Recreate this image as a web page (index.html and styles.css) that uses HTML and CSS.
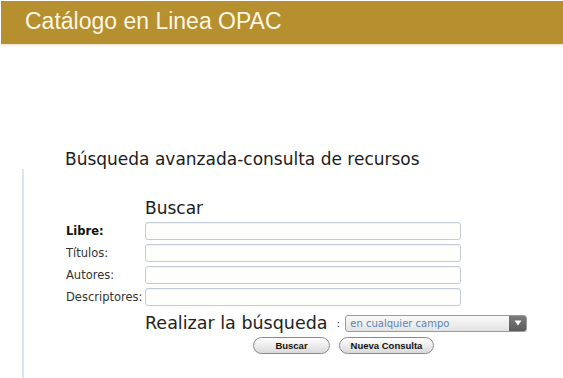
FILE: index.html
```html
<!DOCTYPE html>
<html lang="es">
<head>
<meta charset="utf-8">
<title>Catálogo en Linea OPAC</title>
<link rel="stylesheet" href="styles.css">
</head>
<body>
<header class="topbar">
  <h1 class="brand">Catálogo en Linea OPAC</h1>
</header>
<div class="topshade"></div>
<main class="content">
  <h2 class="page-title">Búsqueda avanzada-consulta de recursos</h2>
  <div class="panel">
    <form class="search-form">
      <div class="legend">Buscar</div>
      <label class="lbl lbl-strong">Libre:</label>
      <input class="field" type="text">
      <label class="lbl">Títulos:</label>
      <input class="field" type="text">
      <label class="lbl">Autores:</label>
      <input class="field" type="text">
      <label class="lbl">Descriptores:</label>
      <input class="field" type="text">
      <div class="scope-row">
        <span class="scope-label">Realizar la búsqueda</span>
        <span class="colon">:</span>
        <div class="select">
          <span class="select-text">en cualquier campo</span>
          <span class="select-arrow"><svg width="8" height="6" viewBox="0 0 8 6"><path d="M0.5 0.5 L7.5 0.5 L4 5.5 Z" fill="#fff"/></svg></span>
        </div>
      </div>
      <div class="actions">
        <button type="button" class="btn btn-search">Buscar</button>
        <button type="button" class="btn btn-new">Nueva Consulta</button>
      </div>
    </form>
  </div>
</main>
</body>
</html>
```
FILE: styles.css
```css
html, body {
  margin: 0;
  padding: 0;
  background: #ffffff;
}
body {
  font-family: "DejaVu Sans", Verdana, sans-serif;
  color: #222;
}
.topbar {
  margin: 1px 0 0 1px;
  height: 43px;
  background: #b68f2f;
  display: flex;
  align-items: center;
}
.brand {
  margin: 0 0 0 24px;
  font-family: "Liberation Sans", Arial, sans-serif;
  font-weight: normal;
  font-size: 23px;
  color: #fbf6e4;
  line-height: 1;
  padding-bottom: 2px;
}
.topshade {
  height: 3px;
  margin-left: 1px;
  background: linear-gradient(#efe6cf, #ffffff);
}
.content {
  padding-top: 102px;
}
.page-title {
  margin: 0 0 0 65px;
  font-weight: normal;
  font-size: 17px;
  line-height: 20px;
  color: #1c1c1c;
}
.panel {
  margin-left: 22px;
  border-left: 2px solid #dfe5ec;
  height: 209px;
  padding-left: 42px;
}
.search-form {
  display: grid;
  grid-template-columns: 79px 316px;
  row-gap: 4px;
  align-items: center;
  padding-top: 29px;
}
.legend {
  grid-column: 2;
  font-size: 17px;
  line-height: 20px;
  color: #1c1c1c;
}
.lbl {
  font-size: 11.5px;
  color: #333;
  white-space: nowrap;
}
.lbl-strong {
  font-weight: bold;
  color: #111;
}
.field {
  box-sizing: border-box;
  height: 18px;
  width: 316px;
  margin: 0;
  border: 1px solid #c3ccd6;
  border-radius: 3px;
  background: #fefefc;
  box-shadow: inset 0 1px 1px rgba(0,0,0,0.05);
}
.scope-row {
  grid-column: 2 / span 1;
  display: flex;
  align-items: center;
  margin-top: 3px;
  width: 400px;
}
.scope-label {
  font-size: 17.5px;
  color: #222;
}
.colon {
  font-size: 11px;
  margin: 0 5px 0 9px;
  color: #333;
}
.select {
  box-sizing: border-box;
  width: 182px;
  height: 17px;
  border: 1px solid #9a9a9a;
  border-radius: 3px;
  background: linear-gradient(#fafafa, #e2e2e2);
  display: flex;
  align-items: center;
  overflow: hidden;
}
.select-text {
  flex: 1;
  font-size: 10px;
  color: #5d84b0;
  padding-left: 4px;
}
.select-arrow {
  width: 17px;
  height: 100%;
  background: linear-gradient(#7b7b7b, #5a5a5a);
  display: flex;
  align-items: center;
  justify-content: center;
}
.actions {
  grid-column: 1 / span 2;
  display: flex;
  gap: 9px;
  padding-left: 187px;
  margin-top: 0;
}
.btn {
  height: 17px;
  padding: 0;
  border: 1px solid #8a8a8a;
  border-radius: 9px;
  background: linear-gradient(#ffffff, #d9d9d9);
  font-family: "Liberation Sans", Arial, sans-serif;
  font-weight: bold;
  font-size: 9.5px;
  color: #111;
}
.btn-search {
  width: 77px;
}
.btn-new {
  width: 95px;
}
```
